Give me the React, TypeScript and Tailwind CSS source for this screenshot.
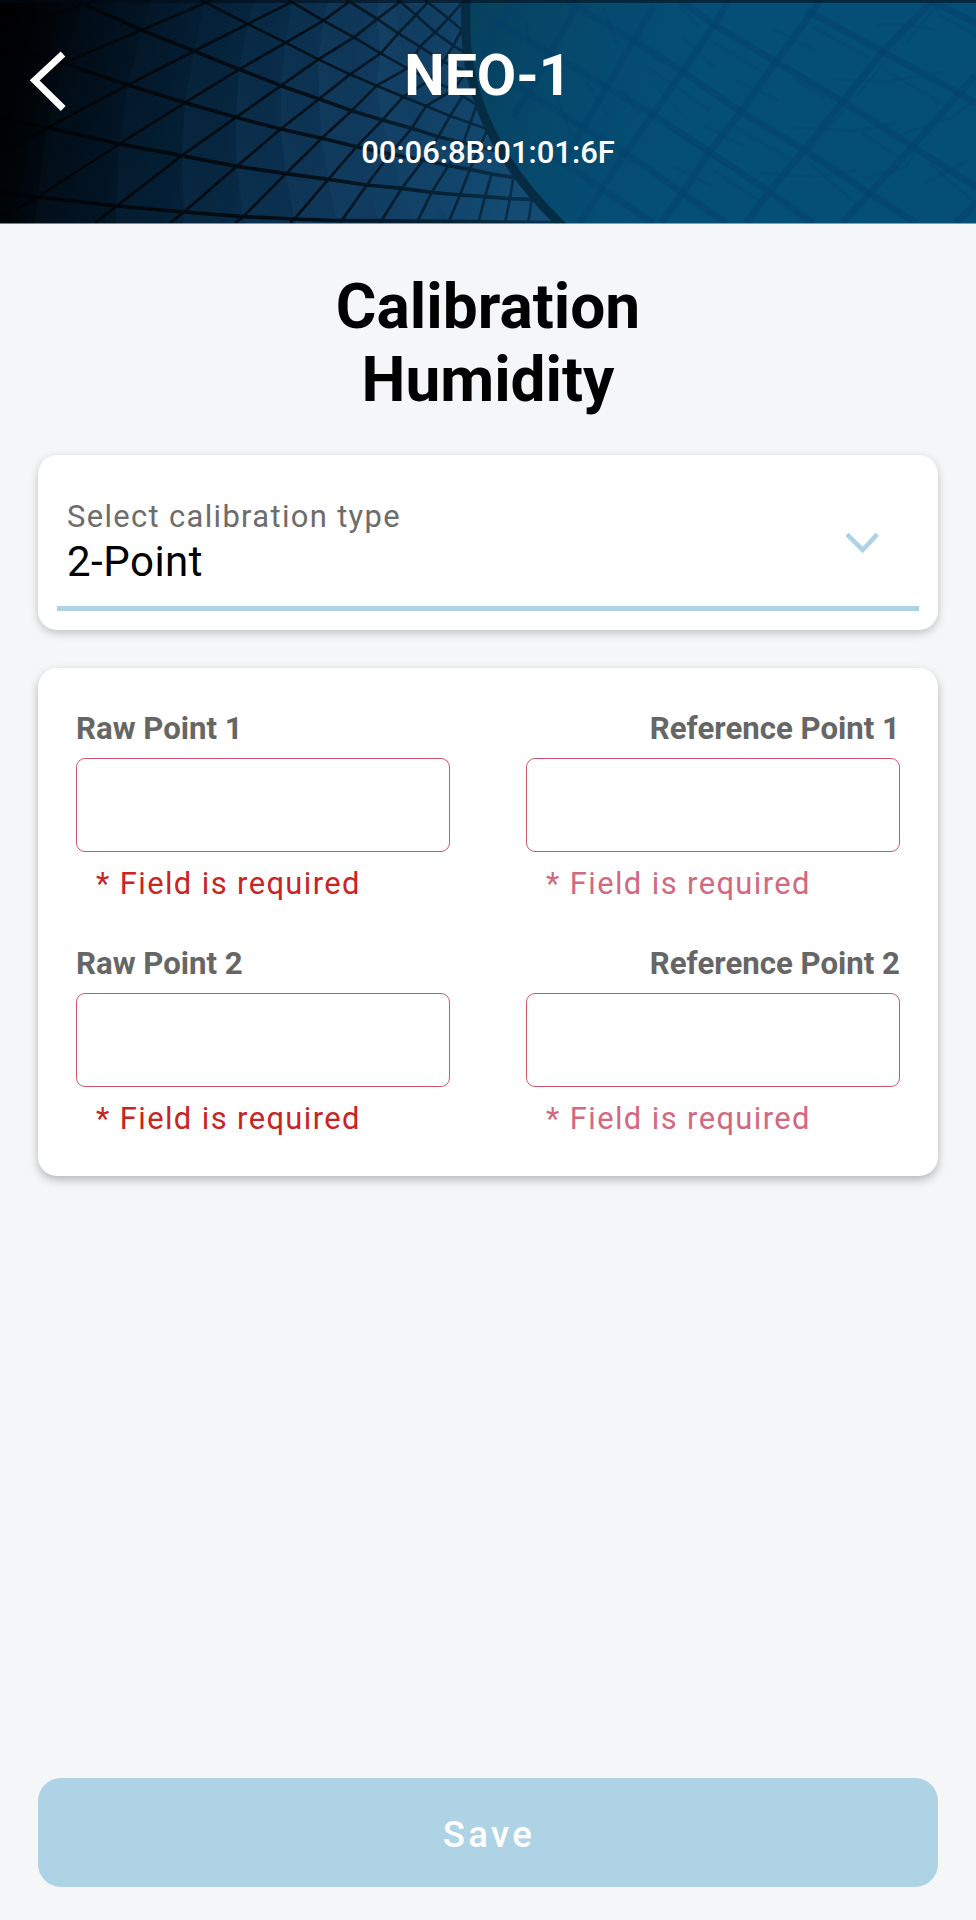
import { useState } from "react";

type FieldProps = {
  label: string;
  align?: "left" | "right";
  muted?: boolean;
};

const points = [1, 2];

// Glass facade, drawn on a 2928x672 grid (three units per pixel).
const facadeColumns = [
  "250,0 190,190 143,383 113,591 105,672 348,672 350,618 358,432 383,255 425,90 455,0",
  "455,0 425,90 383,255 358,432 350,618 348,672 550,672 552,636 545,467 555,308 582,153 617,0",
  "617,0 582,153 555,308 545,467 552,636 550,672 735,672 730,650 710,499 708,352 718,208 743,72 765,0",
  "765,0 743,72 718,208 708,352 710,499 730,650 735,672 888,672 883,657 858,521 842,387 843,257 857,128 877,0",
  "877,0 857,128 843,257 842,387 858,521 883,657 888,672 1010,672 985,538 965,415 957,297 955,178 970,62 985,0",
  "985,0 970,62 955,178 957,297 965,415 985,538 1010,672 1140,672 1100,555 1070,440 1055,332 1050,223 1062,112 1080,0",
  "1135,0 1132,57 1142,160 1130,257 1147,360 1205,565 1250,672 1350,672 1295,577 1235,385 1210,290 1222,205 1195,100 1190,0",
];

const beams = [
  "0,130 190,190 383,255 555,308 708,352 842,387 965,415 1070,440 1170,462 1270,480 1345,497 1410,508 1475,522 1540,532",
  "0,353 143,383 358,432 545,467 710,499 858,521 985,538 1100,555 1205,565 1295,577 1380,585 1455,590 1530,596 1595,598",
  "0,577 113,591 350,618 552,636 730,650 883,657 990,661 1350,664 1660,668",
  "220,0 250,12 425,90 582,153 718,208 843,257 957,297 1055,332 1147,360 1235,385 1315,410 1390,428 1500,455",
];

const mullions = [
  "600,0 617,8 743,72 857,128 955,178 1050,223 1130,257 1210,290 1278,318 1350,348 1405,367 1462,388",
  "865,0 970,62 1062,112 1142,160 1222,205 1290,240 1360,270 1430,315",
  "1040,0 1048,5 1132,57 1195,100 1260,140 1330,185 1400,215",
  "1195,0 1248,45 1305,97 1360,137 1405,165",
  "1275,0 1345,55 1385,90",
  "0,100 250,12 285,0",
  "0,280 190,190 425,90 617,8 635,0",
  "0,465 143,383 383,255 582,153 743,72 875,6",
  "0,655 113,591 358,432 555,308 718,208 857,128 970,62 1048,5",
  "285,669 350,618 545,467 708,352 843,257 955,178 1062,112 1132,57 1200,5",
  "510,669 552,636 710,499 842,387 957,297 1050,223 1142,160 1195,100 1248,45 1285,5",
  "705,669 730,650 858,521 965,415 1055,332 1130,257 1222,205 1260,140 1305,97 1345,55 1390,5",
  "870,669 883,657 985,538 1070,440 1147,360 1210,290 1290,240 1330,185 1360,137 1385,90",
  "1020,669 1100,555 1170,462 1235,385 1278,318 1360,270 1400,215",
  "1140,669 1205,565 1270,480 1315,410 1350,348 1400,270",
  "1250,669 1295,577 1345,497 1390,428 1430,315",
  "1345,669 1380,585 1410,508 1462,388",
  "1435,669 1455,590 1475,522",
  "1515,669 1530,596 1540,532",
  "1585,669 1595,598",
];

const ghostBeams = [
  "2038,0 2143,75 2328,185 2528,305 2738,440 2928,560",
  "1700,0 1938,145 2048,215 2223,335 2413,450 2608,580 2748,669",
  "1480,60 1938,330 2128,455 2308,575 2438,669",
  "1540,250 1938,500 2048,580 2178,669",
  "1600,430 1960,669",
  "2418,30 2648,155 2878,280 2928,310",
  "2788,0 2928,70",
  "2188,0 2143,75 2048,215 1958,345 1860,480 1740,669",
  "2458,0 2448,20 2328,185 2223,335 2128,455 2048,580 1983,669",
  "2800,0 2648,155 2528,305 2413,450 2308,575 2238,669",
  "2928,225 2878,280 2738,440 2608,580 2528,669",
  "2928,610 2868,669",
  "1530,20 1450,160",
  "1730,20 1600,250 1540,350",
  "1960,20 1780,330 1690,480",
];

const ghostCables = [
  "2128,120 2288,215",
  "2378,235 2478,295",
  "2438,80 2608,175",
  "2588,400 2698,472",
  "2638,200 2838,318",
  "2818,45 2928,105",
  "1938,200 2128,330",
  "1998,380 2198,510",
  "2198,375 2378,485",
  "2138,510 2288,610",
  "2788,490 2928,610",
  "2428,490 2568,610",
  "2628,75 2718,72 2800,90",
  "2500,237 2660,245 2838,215",
  "2380,382 2560,392 2690,370",
  "2278,520 2440,530 2568,512",
  "2040,20 2095,80",
  "2050,115 2145,205",
  "2205,240 2335,300",
  "2110,375 2235,440",
  "2020,500 2140,560",
  "1958,250 2045,340",
  "2318,85 2450,155",
  "2710,400 2850,355 2928,300",
  "2590,535 2720,500 2740,455",
  "2770,550 2900,485",
  "2810,20 2720,125",
  "2660,180 2570,285",
  "2540,320 2430,450",
  "1580,60 1585,150",
  "1650,230 1715,410",
  "1810,20 1850,130",
  "1760,250 1830,350",
  "1870,270 1920,350",
];

function HeaderBackdrop() {
  return (
    <svg
      viewBox="0 0 2928 672"
      preserveAspectRatio="none"
      className="absolute inset-0 h-full w-full"
      fill="none"
      aria-hidden="true"
    >
      <defs>
        <linearGradient id="glass" gradientUnits="userSpaceOnUse" x1="0" y1="80" x2="1560" y2="420">
          <stop offset="0" stopColor="#000001" />
          <stop offset="0.08" stopColor="#000408" />
          <stop offset="0.2" stopColor="#010f1c" />
          <stop offset="0.36" stopColor="#031d32" />
          <stop offset="0.52" stopColor="#082b48" />
          <stop offset="0.7" stopColor="#103a5d" />
          <stop offset="1" stopColor="#134b73" />
        </linearGradient>
        <linearGradient id="facet" x1="0" y1="0" x2="1" y2="0">
          <stop offset="0" stopColor="#3f86b4" stopOpacity="0.1" />
          <stop offset="0.6" stopColor="#1c4c70" stopOpacity="0.02" />
          <stop offset="1" stopColor="#000c1c" stopOpacity="0.12" />
        </linearGradient>
        <linearGradient id="sky" gradientUnits="userSpaceOnUse" x1="1400" y1="0" x2="2050" y2="200">
          <stop offset="0" stopColor="#06405e" />
          <stop offset="0.5" stopColor="#06496c" />
          <stop offset="1" stopColor="#054e76" />
        </linearGradient>
        <linearGradient id="beam" gradientUnits="userSpaceOnUse" x1="0" y1="0" x2="1600" y2="0">
          <stop offset="0" stopColor="#000103" />
          <stop offset="0.6" stopColor="#02101a" />
          <stop offset="1" stopColor="#08314d" />
        </linearGradient>
      </defs>

      <rect width="2928" height="672" fill="url(#glass)" />
      {facadeColumns.map((p, i) => (
        <polygon key={p} points={p} fill="url(#facet)" opacity={Math.min(0.85, 0.4 + i * 0.15)} />
      ))}
      <g stroke="url(#beam)" strokeLinejoin="round">
        {beams.map((p) => (
          <polyline key={p} points={p} strokeWidth="11" />
        ))}
        {mullions.map((p) => (
          <polyline key={p} points={p} strokeWidth="8" />
        ))}
      </g>

      <path d="M1397 0V90C1403 300 1500 500 1690 672H2928V0Z" fill="url(#sky)" />
      <g stroke="#033f69" strokeOpacity="0.34" strokeWidth="20" strokeLinejoin="round">
        {ghostBeams.map((p) => (
          <polyline key={p} points={p} />
        ))}
      </g>
      <g stroke="#033f69" strokeOpacity="0.18" strokeWidth="8" strokeLinejoin="round">
        {ghostCables.map((p) => (
          <polyline key={p} points={p} />
        ))}
      </g>
      <path d="M1397 0V90C1403 300 1500 500 1690 680" stroke="#052c43" strokeWidth="27" />
      <rect width="2928" height="9" fill="#020b14" fillOpacity="0.55" />
      <rect y="669" width="2928" height="3" fill="#f4f6f8" fillOpacity="0.5" />
    </svg>
  );
}

function Field({ label, align = "left", muted = false }: FieldProps) {
  const [value, setValue] = useState("");

  return (
    <label className="flex flex-col">
      <span
        className={`text-[31.2px] leading-10 font-bold text-[#666] whitespace-nowrap ${
          align === "right" ? "text-right" : "text-left"
        }`}
      >
        {label}
      </span>
      <input
        value={value}
        onChange={(e) => setValue(e.target.value)}
        className="mt-[9px] h-[94px] w-full rounded-[9px] border border-[#d0566e] px-4 text-[31px] outline-none"
      />
      <span
        className={`mt-3 h-10 pl-5 text-[30.9px] leading-10 tracking-[1.4px] whitespace-nowrap ${
          muted ? "text-[#d2697e]" : "text-[#c82424]"
        }`}
      >
        {value ? "" : "* Field is required"}
      </span>
    </label>
  );
}

export default function App() {
  return (
    <div className="flex h-[1920px] w-[976px] flex-col bg-[#f4f6f8] font-['Roboto',sans-serif]">
      <header className="relative h-[224px] shrink-0 overflow-hidden">
        <HeaderBackdrop />
        <button type="button" aria-label="Back" className="absolute top-[48px] left-[26px]">
          <svg width="44" height="66" viewBox="0 0 44 66" fill="none" stroke="#fff" strokeWidth="6.8">
            <path d="M37 6L8.7 32.4L37.2 60.5" />
          </svg>
        </button>
        <div className="relative flex flex-col items-center pt-11 text-white">
          <h1 className="text-[57.2px] leading-16 font-bold">NEO-1</h1>
          <p className="mt-[25px] text-[31px] leading-10 font-medium">00:06:8B:01:01:6F</p>
        </div>
      </header>

      <main className="flex flex-1 flex-col px-[38px] pt-[47px]">
        <h2 className="text-center text-[62.2px] leading-[72.5px] font-bold text-black">
          Calibration
          <br />
          Humidity
        </h2>

        <section className="mt-[39px] h-[175px] rounded-[19px] bg-white px-[19px] pt-[42px] shadow-[0_3px_9px_rgba(0,0,0,0.22)]">
          <button
            type="button"
            className="flex h-[114px] w-full justify-between border-b-[5px] border-[#aed3e5] pr-[39px] pl-[10px] text-left"
          >
            <span className="flex flex-col">
              <span className="text-[30.9px] leading-10 tracking-[1.35px] text-[#6c6c6c]">Select calibration type</span>
              <span className="mt-px text-[42px] leading-12 tracking-[0.5px] text-black">2-Point</span>
            </span>
            <svg className="mt-[33px]" width="36" height="26" viewBox="0 0 36 26" fill="none" stroke="#aed3e5" strokeWidth="4.6">
              <path d="M3 4.3L18.7 20L33.3 4.3" />
            </svg>
          </button>
        </section>

        <section className="mt-[38px] grid h-[508px] grid-cols-2 content-start gap-x-[76px] gap-y-10 rounded-[19px] bg-white px-[38px] pt-[41px] shadow-[0_4px_10px_rgba(0,0,0,0.26)]">
          {points.map((n) => (
            <div key={n} className="contents">
              <Field label={`Raw Point ${n}`} />
              <Field label={`Reference Point ${n}`} align="right" muted />
            </div>
          ))}
        </section>

        <button
          type="button"
          className="mt-auto mb-[33px] h-[109px] rounded-[23px] bg-[#aed3e5] pt-[6px] pl-[2px] text-[36.5px] font-medium tracking-[3.4px] text-white"
        >
          Save
        </button>
      </main>
    </div>
  );
}
